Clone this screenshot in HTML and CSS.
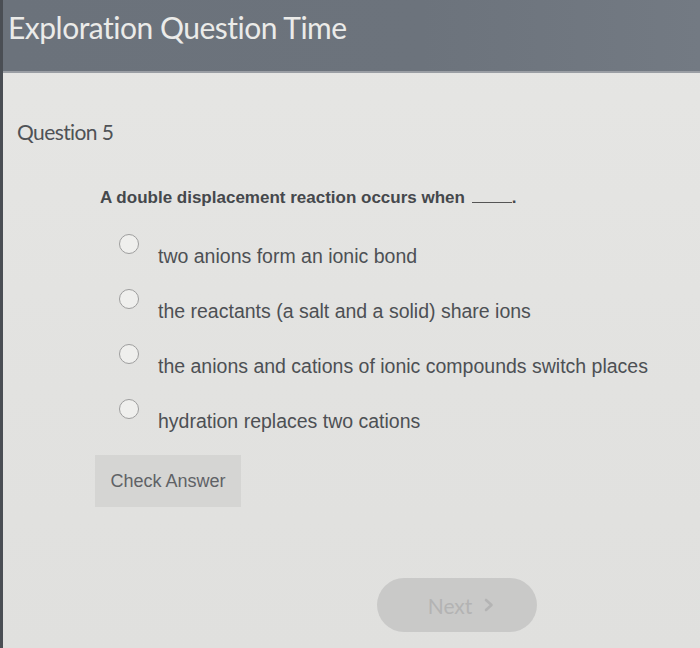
FILE: index.html
```html
<!DOCTYPE html>
<html>
<head>
<meta charset="utf-8">
<link rel="stylesheet" href="styles.css">
</head>
<body>
<div class="page">
  <header class="topbar">
    <h1 class="title">Exploration Question Time</h1>
  </header>
  <main class="content">
    <h2 class="qnum">Question 5</h2>
    <p class="prompt">A double displacement reaction occurs when <span class="blank"></span>.</p>
    <ul class="options">
      <li class="option"><span class="radio"></span><span class="label">two anions form an ionic bond</span></li>
      <li class="option"><span class="radio"></span><span class="label">the reactants (a salt and a solid) share ions</span></li>
      <li class="option"><span class="radio"></span><span class="label">the anions and cations of ionic compounds switch places</span></li>
      <li class="option"><span class="radio"></span><span class="label">hydration replaces two cations</span></li>
    </ul>
    <button class="check">Check Answer</button>
    <div class="nav">
      <button class="next">Next <svg class="chev" width="10" height="14" viewBox="0 0 10 14"><path d="M2 2 L7.5 7 L2 12" fill="none" stroke="#b4b4b4" stroke-width="2.6" stroke-linecap="round" stroke-linejoin="round"/></svg></button>
    </div>
  </main>
</div>
</body>
</html>
```

FILE: styles.css
```css
html, body {
  margin: 0;
  padding: 0;
  background: #e3e3e1;
}
.page {
  width: 700px;
  height: 648px;
  overflow: hidden;
  border-left: 3px solid #4a4e54;
  box-sizing: border-box;
  background: linear-gradient(180deg, #e6e6e4 0%, #e2e2e0 60%, #e0e0de 100%);
}
.topbar {
  height: 73px;
  background: linear-gradient(90deg, #6b727b 0%, #6c737c 60%, #737a83 100%);
  border-bottom: 2px solid #9a9ea4;
  box-sizing: border-box;
  padding: 9px 0 0 5px;
}
.title {
  margin: 0;
  font-family: Lato, "Open Sans", sans-serif;
  font-weight: 400;
  font-size: 30px;
  color: #ebebe9;
  letter-spacing: -0.5px;
}
.content {
  padding: 46px 0 0 14px;
}
.qnum {
  margin: 0;
  font-family: Lato, sans-serif;
  font-weight: 400;
  font-size: 21px;
  color: #4f5256;
  letter-spacing: -0.6px;
}
.prompt {
  margin: 44px 0 0 83px;
  font-family: "Liberation Sans", Arial, sans-serif;
  font-weight: 700;
  font-size: 17px;
  color: #45484c;
}
.blank {
  display: inline-block;
  width: 40px;
  border-bottom: 1px solid #555;
  margin-left: 2px;
}
.options {
  list-style: none;
  margin: 26px 0 0 102px;
  padding: 0;
  display: flex;
  flex-direction: column;
  gap: 22px;
}
.option {
  display: flex;
  align-items: flex-start;
  gap: 19px;
}
.radio {
  width: 18px;
  height: 18px;
  border: 1.5px solid #9e9e9e;
  border-radius: 50%;
  background: #efefed;
  flex: none;
}
.label {
  font-family: "Liberation Sans", Arial, sans-serif;
  font-size: 19.5px;
  line-height: 22px;
  color: #4d5054;
  margin-top: 11px;
}
.check {
  display: block;
  margin: 23px 0 0 78px;
  width: 146px;
  height: 52px;
  border: none;
  background: #d5d5d3;
  font-family: "Liberation Sans", Arial, sans-serif;
  font-size: 18px;
  color: #5f6266;
  padding: 0;
}
.nav {
  display: flex;
  padding: 71px 0 0 360px;
}
.next {
  width: 160px;
  height: 54px;
  border: none;
  border-radius: 27px;
  background: #c9c9c8;
  font-family: Lato, sans-serif;
  font-size: 21px;
  color: #b3b3b3;
  display: flex;
  align-items: center;
  justify-content: center;
  gap: 12px;
  padding: 0 0 0 8px;
}
```
